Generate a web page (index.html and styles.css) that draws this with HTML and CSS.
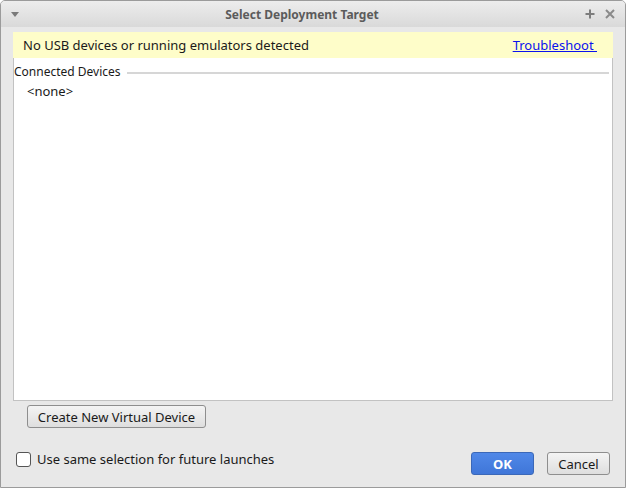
FILE: index.html
```html
<!DOCTYPE html>
<html lang="en">
<head>
  <meta charset="UTF-8" />
  <title>Select Deployment Target</title>
  <link rel="stylesheet" href="styles.css">
</head>
<body>
  <div class="window">
    <div class="titlebar">
      <svg class="menu-arrow" width="8" height="5" viewBox="0 0 8 5"><path d="M0 0 L8 0 L4 5 Z" fill="#7a7a7a"/></svg>
      <span class="title">Select Deployment Target</span>
      <div class="controls">
        <svg width="10" height="10" viewBox="0 0 10 10"><path d="M5 0.5 V9.5 M0.5 5 H9.5" stroke="#7d7d7d" stroke-width="2"/></svg>
        <svg width="10" height="10" viewBox="0 0 10 10"><path d="M1 1 L9 9 M9 1 L1 9" stroke="#8a8a8a" stroke-width="2"/></svg>
      </div>
    </div>

    <div class="content">
      <div class="banner">
        <span>No USB devices or running emulators detected</span>
        <a href="#" class="link">Troubleshoot&nbsp;</a>
      </div>

      <div class="devices">
        <div class="group-title">
          <span>Connected Devices</span>
          <span class="rule"></span>
        </div>
        <div class="device">&lt;none&gt;</div>
      </div>

      <div class="create-row">
        <button class="btn create">Create New Virtual Device</button>
      </div>

      <div class="footer">
        <label class="check">
          <span class="box"></span>
          Use same selection for future launches
        </label>
        <div class="actions">
          <button class="btn primary">OK</button>
          <button class="btn">Cancel</button>
        </div>
      </div>
    </div>
  </div>
</body>
</html>
```

FILE: styles.css
```css
html, body {
  margin: 0;
  padding: 0;
}

body {
  font-family: 'Noto Sans', 'DejaVu Sans', sans-serif;
  font-size: 13px;
  color: #1a1a1a;
}

.window {
  box-sizing: border-box;
  width: 626px;
  height: 488px;
  border: 1px solid #9b9b9b;
  border-radius: 5px 5px 0 0;
  background: #e8e8e8;
  display: flex;
  flex-direction: column;
  overflow: hidden;
}

.titlebar {
  height: 26px;
  flex-shrink: 0;
  display: flex;
  align-items: center;
  justify-content: center;
  position: relative;
  background: linear-gradient(#ededed, #d9d9d9);
}

.menu-arrow {
  position: absolute;
  left: 10px;
  top: 11px;
}

.title {
  font-weight: bold;
  font-size: 12px;
  color: #5b5b5b;
  margin-right: 22px;
}

.controls {
  position: absolute;
  right: 10px;
  top: 8px;
  display: flex;
  gap: 10px;
}

.controls svg {
  display: block;
}

.content {
  flex: 1;
  display: flex;
  flex-direction: column;
  padding: 5px 12px 12px 12px;
}

.banner {
  height: 26px;
  flex-shrink: 0;
  display: flex;
  align-items: center;
  justify-content: space-between;
  background: #fefdc9;
  padding: 0 16px 0 10px;
}

.link {
  color: #0a12ee;
  text-decoration: underline;
}

.devices {
  height: 343px;
  box-sizing: border-box;
  flex-shrink: 0;
  background: #fff;
  border: 1px solid #c2c2c2;
  border-top: none;
  padding: 5px 3px 0 0;
}

.group-title {
  display: flex;
  align-items: center;
  font-size: 12px;
  color: #1a1a1a;
}

.group-title .rule {
  flex: 1;
  height: 2px;
  background: #d6d6d6;
  margin-left: 6px;
  margin-top: 2px;
}

.device {
  padding-left: 13px;
  margin-top: 2px;
  font-size: 13px;
}

.btn {
  font-family: 'Noto Sans', 'DejaVu Sans', sans-serif;
  font-size: 13px;
  color: #1a1a1a;
  height: 23px;
  box-sizing: border-box;
  border: 1px solid #8e8e8e;
  border-radius: 3px;
  background: linear-gradient(#f4f4f4, #dedede);
  padding: 0;
}

.create-row {
  padding-top: 4px;
}

.create {
  margin-left: 14px;
  width: 179px;
}

.footer {
  margin-top: 24px;
  height: 23px;
  display: flex;
  align-items: center;
  justify-content: space-between;
}

.check {
  display: flex;
  align-items: center;
  margin-left: 3px;
  margin-top: -9px;
}

.box {
  width: 13px;
  height: 13px;
  border: 1px solid #555;
  border-radius: 3px;
  background: #fff;
  margin-right: 6px;
}

.actions {
  display: flex;
  gap: 13px;
  margin-right: 3px;
}

.actions .btn {
  width: 63px;
}

.primary {
  background: linear-gradient(#5088e8, #3f76d8);
  border-color: #3b68b8;
  color: #fff;
  font-weight: bold;
}
```
